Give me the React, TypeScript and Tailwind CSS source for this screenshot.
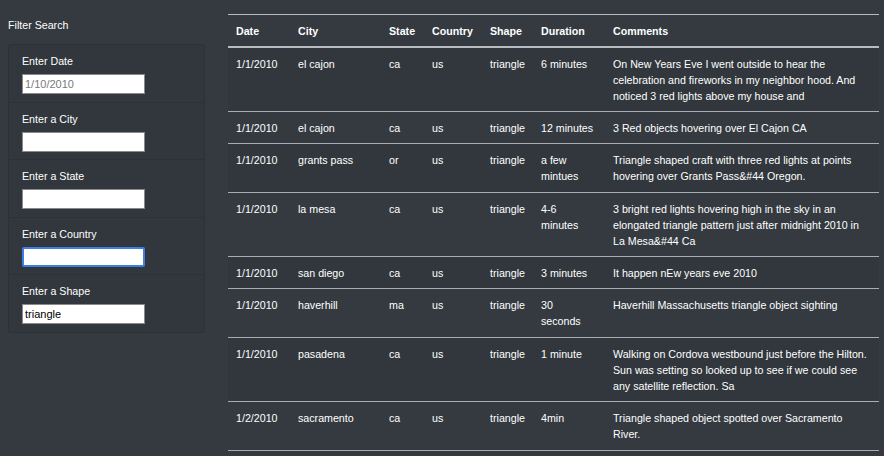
import React from "react";

type Sighting = {
  date: string;
  city: string;
  state: string;
  country: string;
  shape: string;
  duration: string[];
  comments: string[];
};

const sightings: Sighting[] = [
  {
    date: "1/1/2010",
    city: "el cajon",
    state: "ca",
    country: "us",
    shape: "triangle",
    duration: ["6 minutes"],
    comments: [
      "On New Years Eve I went outside to hear the",
      "celebration and fireworks in my neighbor hood. And",
      "noticed 3 red lights above my house and",
    ],
  },
  {
    date: "1/1/2010",
    city: "el cajon",
    state: "ca",
    country: "us",
    shape: "triangle",
    duration: ["12 minutes"],
    comments: ["3 Red objects hovering over El Cajon CA"],
  },
  {
    date: "1/1/2010",
    city: "grants pass",
    state: "or",
    country: "us",
    shape: "triangle",
    duration: ["a few", "mintues"],
    comments: [
      "Triangle shaped craft with three red lights at points",
      "hovering over Grants Pass&#44 Oregon.",
    ],
  },
  {
    date: "1/1/2010",
    city: "la mesa",
    state: "ca",
    country: "us",
    shape: "triangle",
    duration: ["4-6", "minutes"],
    comments: [
      "3 bright red lights hovering high in the sky in an",
      "elongated triangle pattern just after midnight 2010 in",
      "La Mesa&#44 Ca",
    ],
  },
  {
    date: "1/1/2010",
    city: "san diego",
    state: "ca",
    country: "us",
    shape: "triangle",
    duration: ["3 minutes"],
    comments: ["It happen nEw years eve 2010"],
  },
  {
    date: "1/1/2010",
    city: "haverhill",
    state: "ma",
    country: "us",
    shape: "triangle",
    duration: ["30", "seconds"],
    comments: ["Haverhill Massachusetts triangle object sighting"],
  },
  {
    date: "1/1/2010",
    city: "pasadena",
    state: "ca",
    country: "us",
    shape: "triangle",
    duration: ["1 minute"],
    comments: [
      "Walking on Cordova westbound just before the Hilton.",
      "Sun was setting so looked up to see if we could see",
      "any satellite reflection. Sa",
    ],
  },
  {
    date: "1/2/2010",
    city: "sacramento",
    state: "ca",
    country: "us",
    shape: "triangle",
    duration: ["4min"],
    comments: ["Triangle shaped object spotted over Sacramento", "River."],
  },
];

const filters = [
  { id: "datetime", label: "Enter Date", placeholder: "1/10/2010", value: "" },
  { id: "city", label: "Enter a City", placeholder: "", value: "" },
  { id: "state", label: "Enter a State", placeholder: "", value: "" },
  { id: "country", label: "Enter a Country", placeholder: "", value: "", focused: true },
  { id: "shape", label: "Enter a Shape", placeholder: "", value: "triangle" },
];

function Lines({ lines }: { lines: string[] }) {
  return (
    <>
      {lines.map((line, i) => (
        <span key={i} className="block whitespace-nowrap">
          {line}
        </span>
      ))}
    </>
  );
}

export default function App() {
  return (
    <div
      className="min-h-screen bg-[#343a40] text-white flex text-[10.67px] leading-4"
      style={{ fontFamily: '"Liberation Sans", Arial, sans-serif' }}
    >
      {/* Sidebar */}
      <aside className="w-[220px] shrink-0 pl-2 pr-[15px] pt-[17px]">
        <h2 className="mb-[11px]">Filter Search</h2>
        <ul className="rounded-[3px] border border-black/10 bg-black/5">
          {filters.map((f, i) => (
            <li
              key={f.id}
              className={`pl-[13px] pt-2 pb-[7.5px] ${i > 0 ? "border-t border-black/10" : ""}`}
            >
              <label htmlFor={f.id} className="block mb-[5px]">
                {f.label}
              </label>
              <input
                id={f.id}
                type="text"
                placeholder={f.placeholder}
                defaultValue={f.value}
                className={
                  f.focused
                    ? "block w-[123px] h-[20px] bg-white text-black text-[11px] px-[2px] border-2 border-[#3d7fe0] rounded-[2px] outline-none"
                    : "block w-[123px] h-[20px] bg-white text-black text-[11px] px-[2px] border border-[#8a8a8a] outline-none placeholder:text-[#7a7a7a]"
                }
              />
            </li>
          ))}
        </ul>
      </aside>

      {/* Table */}
      <div className="mt-[14px] ml-2">
        <table className="table-fixed w-[651px] border-collapse text-left">
          <colgroup>
            <col className="w-[62px]" />
            <col className="w-[91px]" />
            <col className="w-[43px]" />
            <col className="w-[58px]" />
            <col className="w-[51px]" />
            <col className="w-[72px]" />
            <col className="w-[274px]" />
          </colgroup>
          <thead>
            <tr className="border-t border-[#b8bcc0]">
              {["Date", "City", "State", "Country", "Shape", "Duration", "Comments"].map((h) => (
                <th key={h} className="px-2 pt-[7.5px] pb-[7px] font-bold border-b-2 border-[#b8bcc0]">
                  {h}
                </th>
              ))}
            </tr>
          </thead>
          <tbody>
            {sightings.map((s, i) => (
              <tr key={i} className={`border-b border-[#a9adb1] align-top ${i % 2 === 0 ? "bg-black/5" : ""}`}>
                <td className="px-2 pt-2 pb-[7.4px]">{s.date}</td>
                <td className="px-2 pt-2 pb-[7.4px]">{s.city}</td>
                <td className="px-2 pt-2 pb-[7.4px]">{s.state}</td>
                <td className="px-2 pt-2 pb-[7.4px]">{s.country}</td>
                <td className="px-2 pt-2 pb-[7.4px]">{s.shape}</td>
                <td className="px-2 pt-2 pb-[7.4px]">
                  <Lines lines={s.duration} />
                </td>
                <td className="px-2 pt-2 pb-[7.4px]">
                  <Lines lines={s.comments} />
                </td>
              </tr>
            ))}
          </tbody>
        </table>
      </div>
    </div>
  );
}
